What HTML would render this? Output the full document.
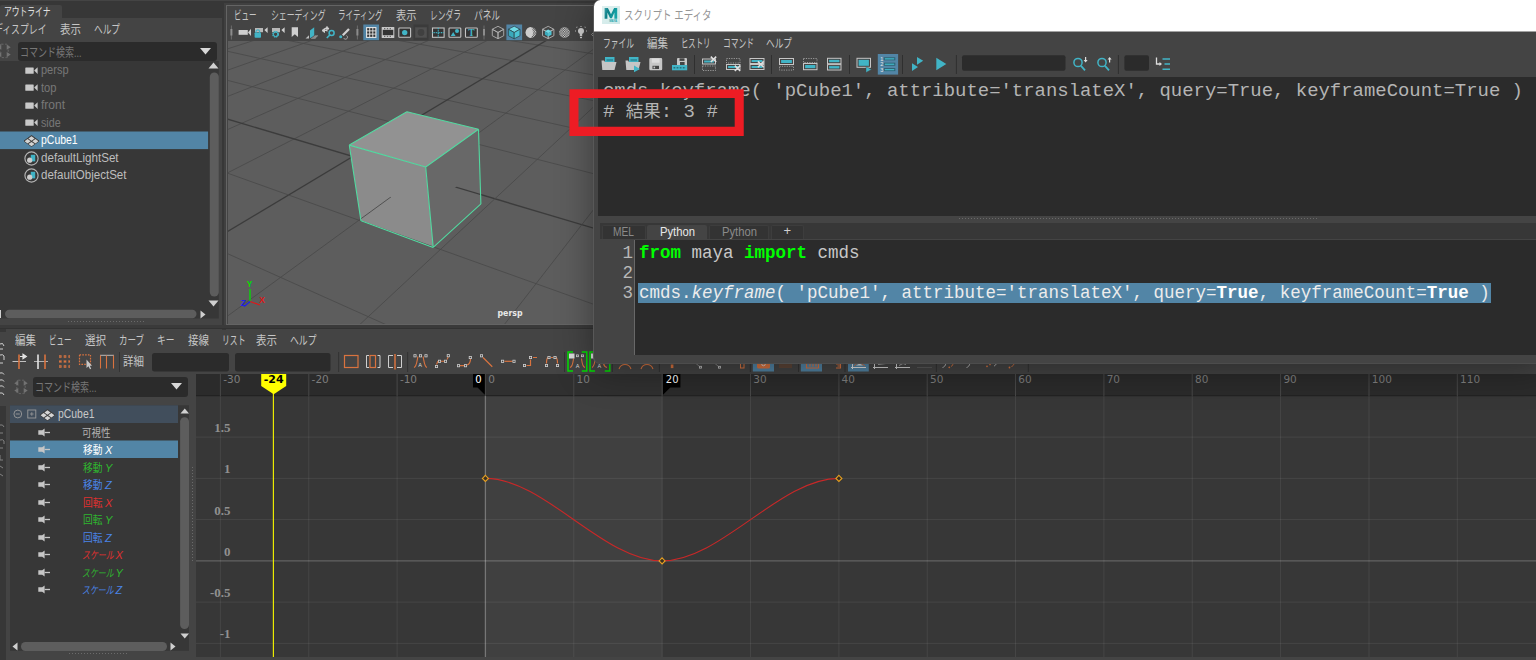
<!DOCTYPE html><html><head><meta charset="utf-8"><title>Maya</title><style>
html,body{margin:0;padding:0}
body{width:1536px;height:660px;overflow:hidden;position:relative;background:#444;font-family:"Liberation Sans","Noto Sans CJK JP",sans-serif;font-size:12px;color:#c8c8c8}
div,span,svg{position:absolute;display:block;box-sizing:border-box}
span{white-space:pre}
</style></head><body>
<div style="left:0px;top:1px;width:596px;height:4px;background:#373737;"></div>
<div style="left:0px;top:5px;width:226px;height:13px;background:#373737;"></div>
<div style="left:222px;top:5px;width:4px;height:325px;background:#373737;"></div>
<div style="left:0px;top:5px;width:62px;height:14px;background:#444;border-radius:2px 2px 0 0"></div>
<span style="left:3.8px;top:5.2px;height:15px;line-height:15px;font-size:11.5px;color:#e0e0e0;transform:scaleX(0.6761);transform-origin:0 50%;">アウトライナ</span>
<span style="left:-6px;top:21.5px;height:17px;line-height:17px;font-size:12px;color:#c6c6c6;transform:scaleX(0.7377);transform-origin:0 50%;">ディスプレイ</span>
<span style="left:60px;top:21.5px;height:17px;line-height:17px;font-size:12px;color:#c6c6c6;transform:scaleX(0.8744);transform-origin:0 50%;">表示</span>
<span style="left:94px;top:21.5px;height:17px;line-height:17px;font-size:12px;color:#c6c6c6;transform:scaleX(0.7219);transform-origin:0 50%;">ヘルプ</span>
<svg style="left:-3px;top:60px" width="223" height="260"><rect x="1.00" y="1.00" width="220.80" height="257.50" fill="#373737"/></svg>
<div style="left:18px;top:42px;width:199px;height:19px;background:#2b2b2b;border-radius:3px"></div>
<span style="left:19.8px;top:43.5px;height:18px;line-height:18px;font-size:12px;color:#777;transform:scaleX(0.7499);transform-origin:0 50%;">コマンド検索...</span>
<svg style="left:200px;top:48px" width="12" height="7"><path d="M0 0h11L5.5 6.5z" fill="#d8d8d8"/></svg>
<svg style="left:-2.7px;top:43px" width="14" height="16" viewBox="0 0 14 16"><rect x="2.8" y="1.2" width="8.4" height="13.4" rx="1.5" fill="none" stroke="#666" stroke-width="1" stroke-dasharray="2.2 1.6"/><path d="M9.7 1.6l4 2.6l-4 2.6zM9.7 9l4 2.6l-4 2.6zM4.3 1.6l-4 2.6l4 2.6zM4.3 9l-4 2.6l4 2.6z" fill="#727272"/></svg>
<svg style="left:25px;top:65.5px" width="14" height="10" viewBox="0 0 14 10"><rect x="0.3" y="1.4" width="8.4" height="6.4" rx="0.6" fill="#c9c9c9"/><path d="M9.2 4.6L12.6 1.2v6.8z" fill="#c9c9c9"/></svg>
<span style="left:41.3px;top:62.1px;height:17px;line-height:17px;font-size:12px;color:#777;transform:scaleX(0.9157);transform-origin:0 50%;">persp</span>
<svg style="left:25px;top:83.0px" width="14" height="10" viewBox="0 0 14 10"><rect x="0.3" y="1.4" width="8.4" height="6.4" rx="0.6" fill="#c9c9c9"/><path d="M9.2 4.6L12.6 1.2v6.8z" fill="#c9c9c9"/></svg>
<span style="left:41.3px;top:79.6px;height:17px;line-height:17px;font-size:12px;color:#777;transform:scaleX(0.9288);transform-origin:0 50%;">top</span>
<svg style="left:25px;top:100.5px" width="14" height="10" viewBox="0 0 14 10"><rect x="0.3" y="1.4" width="8.4" height="6.4" rx="0.6" fill="#c9c9c9"/><path d="M9.2 4.6L12.6 1.2v6.8z" fill="#c9c9c9"/></svg>
<span style="left:41.3px;top:97.1px;height:17px;line-height:17px;font-size:12px;color:#777;transform:scaleX(0.9993);transform-origin:0 50%;">front</span>
<svg style="left:25px;top:118.0px" width="14" height="10" viewBox="0 0 14 10"><rect x="0.3" y="1.4" width="8.4" height="6.4" rx="0.6" fill="#c9c9c9"/><path d="M9.2 4.6L12.6 1.2v6.8z" fill="#c9c9c9"/></svg>
<span style="left:41.3px;top:114.6px;height:17px;line-height:17px;font-size:12px;color:#777;transform:scaleX(0.8948);transform-origin:0 50%;">side</span>
<svg style="left:-3px;top:130px" width="213" height="21"><rect x="1.00" y="1.50" width="210.10" height="17.60" fill="#5285a6"/></svg>
<svg style="left:23px;top:134.5px" width="17" height="12" viewBox="0 0 17 12"><path d="M8.5 0.5L16 6L8.5 11.5L1 6z" fill="#3d3d3d" stroke="#3d3d3d"/><path d="M8.5 1.2L11.6 3.5L8.5 5.7L5.4 3.5zM4.6 4.1L7.7 6.3L4.6 8.5L1.6 6.3zM12.4 4.1L15.4 6.3L12.4 8.5L9.3 6.3zM8.5 6.9L11.6 9.1L8.5 11.2L5.4 9.1z" fill="#d4d4d4"/></svg>
<span style="left:41.3px;top:132.1px;height:17px;line-height:17px;font-size:12px;color:#fff;transform:scaleX(0.8728);transform-origin:0 50%;">pCube1</span>
<svg style="left:24px;top:150.5px" width="15" height="15" viewBox="0 0 15 15"><circle cx="7.5" cy="7.5" r="6.6" fill="none" stroke="#b4b4b4" stroke-width="1.15"/><rect x="6.8" y="3.8" width="4.4" height="6.6" fill="#3fb2c4"/><circle cx="5.7" cy="9.2" r="2.6" fill="#cdcdcd"/></svg>
<span style="left:41.3px;top:149.6px;height:17px;line-height:17px;font-size:12px;color:#bebebe;transform:scaleX(0.9692);transform-origin:0 50%;">defaultLightSet</span>
<svg style="left:24px;top:168.0px" width="15" height="15" viewBox="0 0 15 15"><circle cx="7.5" cy="7.5" r="6.6" fill="none" stroke="#b4b4b4" stroke-width="1.15"/><rect x="6.8" y="3.8" width="4.4" height="6.6" fill="#3fb2c4"/><circle cx="5.7" cy="9.2" r="2.6" fill="#cdcdcd"/></svg>
<span style="left:41.3px;top:167.1px;height:17px;line-height:17px;font-size:12px;color:#bebebe;transform:scaleX(0.9635);transform-origin:0 50%;">defaultObjectSet</span>
<svg style="left:208px;top:62px" width="11" height="7"><path d="M5.5 0.5L10.5 6.5H0.5z" fill="#d0d0d0"/></svg>
<svg style="left:208px;top:71px" width="12" height="227"><rect x="1.80" y="1.50" width="9.00" height="224.00" rx="4.5" fill="#5d5d5d"/></svg>
<svg style="left:208px;top:299.5px" width="11" height="7"><path d="M5.5 6.5L10.5 0.5H0.5z" fill="#d0d0d0"/></svg>
<svg style="left:4px;top:308px" width="194" height="12"><rect x="1.00" y="1.70" width="191.50" height="8.50" rx="4.2" fill="#5d5d5d"/></svg>
<svg style="left:199.5px;top:309.5px" width="6" height="9"><path d="M0.5 0.5L5.5 4.5L0.5 8.5z" fill="#d0d0d0"/></svg>
<div style="left:0px;top:310px;width:1px;height:8px;background:#d0d0d0;"></div>
<div style="left:0px;top:318.5px;width:222px;height:7px;background:#444;"></div>
<div style="left:68px;top:320.5px;width:76px;height:1px;background:repeating-linear-gradient(90deg,#6a6a6a 0 1px,transparent 1px 3px)"></div>
<div style="left:224px;top:3px;width:372px;height:324px;background:#404040;"></div>
<div style="left:226px;top:5px;width:370px;height:320px;background:#444;border:1.5px solid #646464"></div>
<span style="left:234px;top:7.9px;height:17px;line-height:17px;font-size:12px;color:#c6c6c6;transform:scaleX(0.6247);transform-origin:0 50%;">ビュー</span>
<span style="left:270.5px;top:7.9px;height:17px;line-height:17px;font-size:12px;color:#c6c6c6;transform:scaleX(0.6553);transform-origin:0 50%;">シェーディング</span>
<span style="left:338px;top:7.9px;height:17px;line-height:17px;font-size:12px;color:#c6c6c6;transform:scaleX(0.6263);transform-origin:0 50%;">ライティング</span>
<span style="left:396px;top:7.9px;height:17px;line-height:17px;font-size:12px;color:#c6c6c6;transform:scaleX(0.8536);transform-origin:0 50%;">表示</span>
<span style="left:430px;top:7.9px;height:17px;line-height:17px;font-size:12px;color:#c6c6c6;transform:scaleX(0.6456);transform-origin:0 50%;">レンダラ</span>
<span style="left:474px;top:7.9px;height:17px;line-height:17px;font-size:12px;color:#c6c6c6;transform:scaleX(0.7219);transform-origin:0 50%;">パネル</span>
<svg style="left:227.5px;top:40.5px" width="368.5" height="283.1" viewBox="227.5 40.5 368.5 283.1"><rect x="227.5" y="40.5" width="368.5" height="283.1" fill="#5d5d5d"/><path d="M191.7 -9.3L178.8 -6.5" stroke="#4b4b4b" stroke-width="0.9"/><path d="M624.7 -9.0L643.2 -7.0" stroke="#4b4b4b" stroke-width="0.9"/><path d="M233.2 -9.0L181.8 3.0" stroke="#4b4b4b" stroke-width="0.9"/><path d="M538.8 -9.0L644.9 3.2" stroke="#4b4b4b" stroke-width="0.9"/><path d="M275.1 -8.8L180.2 15.1" stroke="#4b4b4b" stroke-width="0.9"/><path d="M453.8 -9.0L641.4 14.3" stroke="#4b4b4b" stroke-width="0.9"/><path d="M320.8 -9.4L178.4 29.1" stroke="#4b4b4b" stroke-width="0.9"/><path d="M369.4 -9.0L643.3 27.8" stroke="#4b4b4b" stroke-width="0.9"/><path d="M363.2 -9.1L182.1 43.9" stroke="#4b4b4b" stroke-width="0.9"/><path d="M285.8 -9.1L645.4 43.6" stroke="#4b4b4b" stroke-width="0.9"/><path d="M405.9 -8.9L180.1 63.4" stroke="#4b4b4b" stroke-width="0.9"/><path d="M202.9 -9.1L641.1 61.1" stroke="#4b4b4b" stroke-width="0.9"/><path d="M448.9 -8.6L177.7 87.1" stroke="#4b4b4b" stroke-width="0.9"/><path d="M178.9 1.2L643.4 83.4" stroke="#4b4b4b" stroke-width="0.9"/><path d="M494.7 -9.2L182.6 113.4" stroke="#4b4b4b" stroke-width="0.9"/><path d="M178.3 18.4L638.0 109.0" stroke="#4b4b4b" stroke-width="0.9"/><path d="M538.2 -9.0L179.9 150.0" stroke="#4b4b4b" stroke-width="0.9"/><path d="M181.4 40.6L640.5 142.7" stroke="#4b4b4b" stroke-width="0.9"/><path d="M582.1 -8.7L186.6 193.0" stroke="#4b4b4b" stroke-width="0.9"/><path d="M180.9 68.1L643.7 186.1" stroke="#4b4b4b" stroke-width="0.9"/><path d="M627.9 -9.3L183.7 257.1" stroke="#3c3c3c" stroke-width="1.35"/><path d="M180.3 104.7L635.7 240.4" stroke="#3c3c3c" stroke-width="1.35"/><path d="M645.7 10.3L179.5 350.2" stroke="#4b4b4b" stroke-width="0.9"/><path d="M179.4 155.6L639.2 320.3" stroke="#4b4b4b" stroke-width="0.9"/><path d="M643.9 59.1L312.5 367.6" stroke="#4b4b4b" stroke-width="0.9"/><path d="M178.1 231.2L482.0 367.4" stroke="#4b4b4b" stroke-width="0.9"/><path d="M643.7 143.8L474.0 362.5" stroke="#4b4b4b" stroke-width="0.9"/><path d="M186.3 361.7L196.8 368.0" stroke="#4b4b4b" stroke-width="0.9"/><path d="M643.3 336.0L627.6 368.9" stroke="#4b4b4b" stroke-width="0.9"/><path d="M348.8 144.6L425.2 166.5L432.7 246.9L360.5 220.3z" fill="#8b8b8b"/><path d="M425.2 166.5L478.0 128.7L480.4 203.4L432.7 246.9z" fill="#686868"/><path d="M348.8 144.6L406.4 111.3L478.0 128.7L425.2 166.5z" fill="#929292"/><clipPath id="lowc"><path d="M355.1 184.9L428.3 208.7L479.2 167.1L480.4 203.4L432.7 246.9L360.5 220.3z"/></clipPath><g clip-path="url(#lowc)"><path d="M191.7 -9.3L178.8 -6.5" stroke="#4b4b4b" stroke-width="0.9"/><path d="M624.7 -9.0L643.2 -7.0" stroke="#4b4b4b" stroke-width="0.9"/><path d="M233.2 -9.0L181.8 3.0" stroke="#4b4b4b" stroke-width="0.9"/><path d="M538.8 -9.0L644.9 3.2" stroke="#4b4b4b" stroke-width="0.9"/><path d="M275.1 -8.8L180.2 15.1" stroke="#4b4b4b" stroke-width="0.9"/><path d="M453.8 -9.0L641.4 14.3" stroke="#4b4b4b" stroke-width="0.9"/><path d="M320.8 -9.4L178.4 29.1" stroke="#4b4b4b" stroke-width="0.9"/><path d="M369.4 -9.0L643.3 27.8" stroke="#4b4b4b" stroke-width="0.9"/><path d="M363.2 -9.1L182.1 43.9" stroke="#4b4b4b" stroke-width="0.9"/><path d="M285.8 -9.1L645.4 43.6" stroke="#4b4b4b" stroke-width="0.9"/><path d="M405.9 -8.9L180.1 63.4" stroke="#4b4b4b" stroke-width="0.9"/><path d="M202.9 -9.1L641.1 61.1" stroke="#4b4b4b" stroke-width="0.9"/><path d="M448.9 -8.6L177.7 87.1" stroke="#4b4b4b" stroke-width="0.9"/><path d="M178.9 1.2L643.4 83.4" stroke="#4b4b4b" stroke-width="0.9"/><path d="M494.7 -9.2L182.6 113.4" stroke="#4b4b4b" stroke-width="0.9"/><path d="M178.3 18.4L638.0 109.0" stroke="#4b4b4b" stroke-width="0.9"/><path d="M538.2 -9.0L179.9 150.0" stroke="#4b4b4b" stroke-width="0.9"/><path d="M181.4 40.6L640.5 142.7" stroke="#4b4b4b" stroke-width="0.9"/><path d="M582.1 -8.7L186.6 193.0" stroke="#4b4b4b" stroke-width="0.9"/><path d="M180.9 68.1L643.7 186.1" stroke="#4b4b4b" stroke-width="0.9"/><path d="M627.9 -9.3L183.7 257.1" stroke="#3c3c3c" stroke-width="1.35"/><path d="M180.3 104.7L635.7 240.4" stroke="#3c3c3c" stroke-width="1.35"/><path d="M645.7 10.3L179.5 350.2" stroke="#4b4b4b" stroke-width="0.9"/><path d="M179.4 155.6L639.2 320.3" stroke="#4b4b4b" stroke-width="0.9"/><path d="M643.9 59.1L312.5 367.6" stroke="#4b4b4b" stroke-width="0.9"/><path d="M178.1 231.2L482.0 367.4" stroke="#4b4b4b" stroke-width="0.9"/><path d="M643.7 143.8L474.0 362.5" stroke="#4b4b4b" stroke-width="0.9"/><path d="M186.3 361.7L196.8 368.0" stroke="#4b4b4b" stroke-width="0.9"/><path d="M643.3 336.0L627.6 368.9" stroke="#4b4b4b" stroke-width="0.9"/></g><path d="M348.8 144.6L406.4 111.3M406.4 111.3L478.0 128.7M478.0 128.7L425.2 166.5M425.2 166.5L348.8 144.6M348.8 144.6L360.5 220.3M425.2 166.5L432.7 246.9M478.0 128.7L480.4 203.4M360.5 220.3L432.7 246.9M432.7 246.9L480.4 203.4" stroke="#52d9a0" stroke-width="1.1" fill="none" stroke-linejoin="round"/><path d="M249.5 301V288.5" stroke="#00e000" stroke-width="1.3"/><path d="M249.5 301L259.5 304.5" stroke="#e01818" stroke-width="1.3"/><path d="M249.5 301L243.5 306" stroke="#2020e8" stroke-width="1.3"/><text x="246.3" y="287" font-size="8.5" font-weight="bold" fill="#00e000" font-family="Liberation Sans,sans-serif">Y</text><text x="258.8" y="303" font-size="8.5" font-weight="bold" fill="#e01818" font-family="Liberation Sans,sans-serif">X</text><text x="240.2" y="306" font-size="8.5" font-weight="bold" fill="#2020e8" font-family="Liberation Sans,sans-serif">Z</text><text x="497" y="315.5" font-size="9.5" font-weight="bold" fill="#e8e8e8" font-family="DejaVu Sans,Liberation Sans,sans-serif" textLength="25" lengthAdjust="spacingAndGlyphs">persp</text></svg>
<svg style="left:228px;top:23px" width="366" height="18" viewBox="228 23 366 18"><path d="M231.4 25.5V39.5" stroke="#777" stroke-width="0.8"/><rect x="230.4" y="29" width="2" height="6.5" fill="#8c8c8c"/><path d="M357.4 25.5V39.5" stroke="#777" stroke-width="0.8"/><rect x="356.4" y="29" width="2" height="6.5" fill="#8c8c8c"/><path d="M484 25.5V39.5" stroke="#777" stroke-width="0.8"/><rect x="483" y="29" width="2" height="6.5" fill="#8c8c8c"/><rect x="238.6" y="30" width="9.2" height="4.8" fill="#cfcfcf"/><path d="M248 32.4L251 28.8V36z" fill="#cfcfcf"/><rect x="255" y="28" width="8" height="4.2" fill="#b8b8b8"/><path d="M264.4 30L267.6 27.2V33z" fill="#cfcfcf"/><rect x="254.6" y="32.5" width="6.4" height="5.3" rx="0.8" fill="#41b4c6"/><path d="M256 32.8V31.6a1.8 1.8 0 0 1 3.6 0V32.8" fill="none" stroke="#41b4c6" stroke-width="1.2"/><rect x="272" y="28" width="8" height="4.2" fill="#b8b8b8"/><path d="M281.4 30L284.6 27.2V33z" fill="#cfcfcf"/><circle cx="275.6" cy="34.3" r="2.6" fill="none" stroke="#41b4c6" stroke-width="1.7" stroke-dasharray="1.5 0.55"/><circle cx="275.6" cy="34.3" r="2.2" fill="none" stroke="#41b4c6" stroke-width="1"/><path d="M291.7 27.3H298V37L294.85 34.3L291.7 37z" fill="#cfcfcf"/><path d="M310 30.6L314.2 27.3V35.6L310 38.2z" fill="#41b4c6"/><path d="M305.5 38.5L309 35.2V38.5zM310.8 38.6L315 35.6H318.2L315.4 38.6z" fill="#bdbdbd"/><path d="M312 37.5L317 37.2M313 36.3L317.5 36" stroke="#444" stroke-width="0.5"/><path d="M322 30.5L324.5 28.5V32.5zM324.5 30.5H327M327 26.5L325 29H329zM327 29V31.5" fill="#cfcfcf" stroke="#cfcfcf" stroke-width="1"/><circle cx="331.6" cy="33" r="2.5" fill="none" stroke="#41b4c6" stroke-width="1.5"/><path d="M329.8 35L326.8 38" stroke="#41b4c6" stroke-width="1.7"/><path d="M348.2 28.2L349.8 29.8L343.6 36L342 34.4z" fill="#cfcfcf"/><circle cx="340.7" cy="36.7" r="1.5" fill="#41b4c6"/><path d="M346.5 35.5a2 2 0 1 1-2.8 2.6" fill="none" stroke="#aaa" stroke-width="0.9"/><rect x="363.3" y="24.5" width="15.7" height="15.7" fill="#5285a6"/><rect x="366.6" y="27.6" width="9.3" height="9.8" fill="#333" stroke="#e6e6e6" stroke-width="1.1"/><path d="M369.7 27.6V37.4M372.8 27.6V37.4M366.6 30.9H375.9M366.6 34.1H375.9" stroke="#e6e6e6" stroke-width="0.9"/><rect x="382.2" y="27.6" width="11.6" height="9.8" fill="#333" stroke="#cfcfcf" stroke-width="1"/><rect x="382.2" y="27.6" width="11.6" height="2.2" fill="#cfcfcf"/><rect x="382.2" y="35.2" width="11.6" height="2.2" fill="#cfcfcf"/><path d="M384 28.7H392.5M384 36.3H392.5" stroke="#444" stroke-width="0.9" stroke-dasharray="1.4 1.4"/><rect x="398.8" y="28" width="11.8" height="9.3" rx="0.8" fill="#333" stroke="#c4c4c4" stroke-width="1.1"/><circle cx="404.7" cy="32.6" r="2.7" fill="#41b4c6"/><rect x="413.5" y="24.5" width="15" height="15.7" fill="#3b3b3b"/><rect x="415.2" y="27.3" width="11.6" height="10.4" fill="#505050"/><circle cx="421" cy="32.5" r="3.4" fill="#404040"/><rect x="432.5" y="28" width="11.6" height="9.3" fill="#333" stroke="#c4c4c4" stroke-width="1.1"/><path d="M438.3 28V37.3M432.5 32.6H444" stroke="#41b4c6" stroke-width="1.3" stroke-dasharray="1 0.7"/><rect x="449" y="28" width="11.8" height="9.3" rx="0.8" fill="#333" stroke="#c4c4c4" stroke-width="1.1"/><circle cx="457" cy="31" r="2" fill="#41b4c6"/><path d="M450.8 36L453.2 32L455.6 36z" fill="#41b4c6"/><rect x="465.5" y="28" width="11.8" height="9.3" rx="0.8" fill="#333" stroke="#c4c4c4" stroke-width="1.1"/><text x="468.2" y="36" font-family="Liberation Serif,serif" font-weight="bold" font-size="9.5" fill="#41b4c6">T</text><path d="M498 26.3L503.704 29.276L498 32.5L492.296 29.276z" fill="none" stroke="#b0b0b0" stroke-width="0.9" stroke-linejoin="round"/><path d="M492.296 29.276L498 32.5V38.7L492.296 35.724000000000004z" fill="none" stroke="#b0b0b0" stroke-width="0.9" stroke-linejoin="round"/><path d="M503.704 29.276L498 32.5V38.7L503.704 35.724000000000004z" fill="none" stroke="#b0b0b0" stroke-width="0.9" stroke-linejoin="round"/><rect x="506.4" y="24.5" width="15.7" height="15.7" fill="#5285a6"/><path d="M514.2 26.2L519.9960000000001 29.224L514.2 32.5L508.40400000000005 29.224z" fill="#6fdbe6" stroke="#2d3d44" stroke-width="0.7" stroke-linejoin="round"/><path d="M508.40400000000005 29.224L514.2 32.5V38.8L508.40400000000005 35.775999999999996z" fill="#3aa9bb" stroke="#2d3d44" stroke-width="0.7" stroke-linejoin="round"/><path d="M519.9960000000001 29.224L514.2 32.5V38.8L519.9960000000001 35.775999999999996z" fill="#4cc3d3" stroke="#2d3d44" stroke-width="0.7" stroke-linejoin="round"/><defs><pattern id="ck" width="2.4" height="2.4" patternUnits="userSpaceOnUse"><rect width="2.4" height="2.4" fill="#444"/><rect width="1.2" height="1.2" fill="#ddd"/><rect x="1.2" y="1.2" width="1.2" height="1.2" fill="#ddd"/></pattern></defs><circle cx="531" cy="32.5" r="5.4" fill="url(#ck)"/><path d="M531 27.1a5.4 5.4 0 0 0 0 10.8 8 8 0 0 0 0-10.8z" fill="#cdcdcd"/><path d="M548.2 26.3L553.904 29.276L548.2 32.5L542.4960000000001 29.276z" fill="none" stroke="#b0b0b0" stroke-width="0.9" stroke-linejoin="round"/><path d="M542.4960000000001 29.276L548.2 32.5V38.7L542.4960000000001 35.724000000000004z" fill="none" stroke="#b0b0b0" stroke-width="0.9" stroke-linejoin="round"/><path d="M553.904 29.276L548.2 32.5V38.7L553.904 35.724000000000004z" fill="none" stroke="#b0b0b0" stroke-width="0.9" stroke-linejoin="round"/><path d="M548.2 29.4L551.5120000000001 31.128L548.2 33L544.888 31.128z" fill="#6fdbe6" stroke="none" stroke-width="0" stroke-linejoin="round"/><path d="M544.888 31.128L548.2 33V36.6L544.888 34.872z" fill="#3aa9bb" stroke="none" stroke-width="0" stroke-linejoin="round"/><path d="M551.5120000000001 31.128L548.2 33V36.6L551.5120000000001 34.872z" fill="#4cc3d3" stroke="none" stroke-width="0" stroke-linejoin="round"/><circle cx="564.5" cy="32.5" r="5.4" fill="url(#ck)"/><circle cx="581" cy="31" r="3" fill="#cfcfcf"/><rect x="579.8" y="33" width="2.4" height="3.2" fill="#cfcfcf"/><rect x="580" y="37" width="2" height="1.2" fill="#cfcfcf"/><path d="M581 26V27M576 31H575M586 31H587M577.2 27.5L576.6 26.9M584.8 27.5L585.4 26.9" stroke="#bbb" stroke-width="1.2"/><path d="M593.5 32.5L591.5 34.5L593.5 36.5" stroke="#999" fill="none" stroke-width="0.9"/></svg>
<div style="left:0px;top:325px;width:600px;height:3px;background:#3a3a3a;"></div>
<div style="left:0px;top:327.5px;width:600px;height:1.5px;background:#323232;"></div>
<div style="left:0px;top:329px;width:6px;height:331px;background:#373737;"></div>
<div style="left:0px;top:332px;width:6px;height:74px;background:#444;"></div>
<svg style="left:0;top:329px" width="6" height="200" viewBox="0 329 6 200"><path d="M0 344q3 -2 4 2M0 349h3M0 355q3 -1 4 1v4M0 363h3M0 373q3 -1 4 1.5M0 380q3 -1 4 1.5M0 386q3 -1 4 1.5M0 393q3 -1 4 2" stroke="#e0e0e0" stroke-width="0.9" fill="none"/><path d="M0 425q3 -1 4 2M0 433h3M0 440q3 -1 4 1v3M0 448h3M0 455v5h3M0 466l3 2M0 474l3 2" stroke="#8a8a8a" stroke-width="0.9" fill="none"/></svg>
<span style="left:15px;top:332.8px;height:17px;line-height:17px;font-size:12px;color:#c6c6c6;transform:scaleX(0.8744);transform-origin:0 50%;">編集</span>
<span style="left:49px;top:332.8px;height:17px;line-height:17px;font-size:12px;color:#c6c6c6;transform:scaleX(0.6247);transform-origin:0 50%;">ビュー</span>
<span style="left:85px;top:332.8px;height:17px;line-height:17px;font-size:12px;color:#c6c6c6;transform:scaleX(0.8744);transform-origin:0 50%;">選択</span>
<span style="left:119px;top:332.8px;height:17px;line-height:17px;font-size:12px;color:#c6c6c6;transform:scaleX(0.7086);transform-origin:0 50%;">カーブ</span>
<span style="left:157px;top:332.8px;height:17px;line-height:17px;font-size:12px;color:#c6c6c6;transform:scaleX(0.7287);transform-origin:0 50%;">キー</span>
<span style="left:188px;top:332.8px;height:17px;line-height:17px;font-size:12px;color:#c6c6c6;transform:scaleX(0.8744);transform-origin:0 50%;">接線</span>
<span style="left:221.5px;top:332.8px;height:17px;line-height:17px;font-size:12px;color:#c6c6c6;transform:scaleX(0.6525);transform-origin:0 50%;">リスト</span>
<span style="left:256px;top:332.8px;height:17px;line-height:17px;font-size:12px;color:#c6c6c6;transform:scaleX(0.8744);transform-origin:0 50%;">表示</span>
<span style="left:290px;top:332.8px;height:17px;line-height:17px;font-size:12px;color:#c6c6c6;transform:scaleX(0.7358);transform-origin:0 50%;">ヘルプ</span>
<svg style="left:6px;top:349px" width="1100" height="25" viewBox="6 349 1100 25"><path d="M12.5 361.5H26" stroke="#cfcfcf" stroke-width="0.9"/><path d="M19 354.5V369" stroke="#d9733f" stroke-width="1.6"/><path d="M20 356.5H24M23 354.3L26.3 356.5L23 358.7z" stroke="#e4e4e4" fill="#e4e4e4" stroke-width="1.2"/><path d="M34 361.5H48" stroke="#bbb" stroke-width="0.9"/><path d="M38 354.5V369" stroke="#e4e4e4" stroke-width="1.6"/><path d="M45 354.5V369" stroke="#d9733f" stroke-width="1.6"/><path d="M59 356.5H70M59 361.5H70M59 366.5H70" stroke="#d9733f" stroke-width="2.6" stroke-dasharray="2.6 2.1"/><path d="M60 356V367M65 356V367M70 356V367" stroke="#555" stroke-width="0.6" stroke-dasharray="1 1"/><rect x="79.5" y="354.8" width="11" height="9.5" fill="none" stroke="#d9733f" stroke-width="1.2" stroke-dasharray="1.6 1.2"/><path d="M86.5 359.5V368L88.5 366.2L90 369.3L91.2 368.7L89.8 365.8H92z" fill="#c8c8c8"/><path d="M100 355.3H114" stroke="#bbb" stroke-width="1"/><path d="M100.5 355.5V368.5M106.5 355.5V368.5M113.5 355.5V368.5" stroke="#d9733f" stroke-width="1.1"/><path d="M119.5 352V372" stroke="#333" stroke-width="1"/><rect x="152" y="353" width="77" height="18.5" rx="2.5" fill="#2b2b2b"/><rect x="235" y="353" width="95.5" height="18.5" rx="2.5" fill="#2b2b2b"/><path d="M338.6 352V372" stroke="#333" stroke-width="1"/><rect x="344.5" y="355.5" width="13.5" height="12" fill="none" stroke="#d9733f" stroke-width="1.2"/><path d="M369 355.5H366.5V367.5H369M377.5 355.5H380V367.5H377.5" fill="none" stroke="#cfcfcf" stroke-width="1"/><rect x="370" y="355.5" width="5.5" height="12" fill="none" stroke="#d9733f" stroke-width="1.2"/><path d="M393 355.5H388.5V367.5H393M397 355.5H401.5V367.5H397" fill="none" stroke="#cfcfcf" stroke-width="1"/><path d="M395 354V369.5" stroke="#d9733f" stroke-width="1.5"/><path d="M407.6 352V372" stroke="#333" stroke-width="1"/><path d="M414 367.5c3 -1 3 -8 4 -11M427 367.5c-3 -1 -3 -8 -4 -11" fill="none" stroke="#d9733f" stroke-width="1.1"/><rect x="413.9" y="354.7" width="2.2" height="2.2" fill="#444" stroke="#d0d0d0" stroke-width="0.8"/><rect x="419.4" y="354.7" width="2.2" height="2.2" fill="#444" stroke="#d0d0d0" stroke-width="0.8"/><rect x="424.9" y="354.7" width="2.2" height="2.2" fill="#444" stroke="#d0d0d0" stroke-width="0.8"/><text x="418.3" y="367" font-size="5.5" fill="#ddd" font-family="Liberation Sans,sans-serif">A</text><path d="M436.5 364.5l1.5 -3.5M441 361.3h3M447 359.5l1.3 -2.5" stroke="#d9733f" stroke-width="1.1"/><rect x="435.4" y="365.4" width="2.2" height="2.2" fill="#444" stroke="#d0d0d0" stroke-width="0.8"/><rect x="438.4" y="360.2" width="2.2" height="2.2" fill="#444" stroke="#d0d0d0" stroke-width="0.8"/><rect x="444.4" y="360.2" width="2.2" height="2.2" fill="#444" stroke="#d0d0d0" stroke-width="0.8"/><rect x="447.2" y="354.59999999999997" width="2.2" height="2.2" fill="#444" stroke="#d0d0d0" stroke-width="0.8"/><path d="M460 365.7h4.5M467 365c3 -1 3.5 -4 3.5 -6" fill="none" stroke="#d9733f" stroke-width="1.2"/><rect x="457.4" y="364.59999999999997" width="2.2" height="2.2" fill="#444" stroke="#d0d0d0" stroke-width="0.8"/><rect x="464.4" y="364.59999999999997" width="2.2" height="2.2" fill="#444" stroke="#d0d0d0" stroke-width="0.8"/><rect x="469.2" y="356.4" width="2.2" height="2.2" fill="#444" stroke="#d0d0d0" stroke-width="0.8"/><path d="M483 357.5L492.3 366.7" stroke="#d9733f" stroke-width="1.2"/><rect x="480.4" y="354.7" width="2.2" height="2.2" fill="#444" stroke="#d0d0d0" stroke-width="0.8"/><path d="M504.5 361.3H512.5" stroke="#d9733f" stroke-width="1.2"/><rect x="501.5" y="360.2" width="2.2" height="2.2" fill="#444" stroke="#d0d0d0" stroke-width="0.8"/><rect x="512.9" y="360.2" width="2.2" height="2.2" fill="#444" stroke="#d0d0d0" stroke-width="0.8"/><path d="M526.5 365.5H530.5V359.5M533 357.5H537" fill="none" stroke="#d9733f" stroke-width="1.2"/><rect x="523.4" y="364.4" width="2.2" height="2.2" fill="#444" stroke="#d0d0d0" stroke-width="0.8"/><rect x="529.4" y="356.4" width="2.2" height="2.2" fill="#444" stroke="#d0d0d0" stroke-width="0.8"/><path d="M546.5 363.5c0 -3 0 -5 1.5 -6M551 357.5h2M557.5 363.5c0 -3 0 -5 -1.5 -6" fill="none" stroke="#d9733f" stroke-width="1.2"/><rect x="547.9" y="356.4" width="2.2" height="2.2" fill="#444" stroke="#d0d0d0" stroke-width="0.8"/><rect x="553.9" y="356.4" width="2.2" height="2.2" fill="#444" stroke="#d0d0d0" stroke-width="0.8"/><rect x="545.4" y="364.4" width="2.2" height="2.2" fill="#444" stroke="#d0d0d0" stroke-width="0.8"/><rect x="556.4" y="364.4" width="2.2" height="2.2" fill="#444" stroke="#d0d0d0" stroke-width="0.8"/><path d="M564.5 352V372" stroke="#333" stroke-width="1"/><path d="M573 352H568V371H573M581.8 352H586.8V371H581.8" fill="none" stroke="#00e000" stroke-width="1.5"/><path d="M595 352H590V371H595M604.8 352H609.8V371H604.8" fill="none" stroke="#00e000" stroke-width="1.5"/><path d="M570 367.5c3 -1 3 -6 3.5 -9M585 367.5c-3 -1 -3 -6 -3.5 -9" fill="none" stroke="#d9733f" stroke-width="1.1"/><rect x="569" y="353.5" width="5.5" height="5" fill="#d8d8d8"/><rect x="576.6" y="354.90000000000003" width="1.8" height="1.8" fill="#444" stroke="#d0d0d0" stroke-width="0.8"/><rect x="581.6" y="354.90000000000003" width="1.8" height="1.8" fill="#444" stroke="#d0d0d0" stroke-width="0.8"/><text x="575.8" y="367.5" font-size="5.5" fill="#ddd" font-family="Liberation Sans,sans-serif">A</text><path d="M592 367.5c2 -1 2.5 -4 3 -7M607 367.5c-2 -0.5 -3 -2 -3.5 -4" fill="none" stroke="#d9733f" stroke-width="1.1"/><rect x="591" y="353.5" width="5.5" height="5" fill="#d8d8d8"/><text x="597.5" y="367.5" font-size="5.5" fill="#ddd" font-family="Liberation Sans,sans-serif">A</text><path d="M612.3 364V372" stroke="#333" stroke-width="1"/><path d="M619 369c2 -6 10 -6 12 0M641 369c2 -6 10 -6 12 0" fill="none" stroke="#d9733f" stroke-width="1.1"/><path d="M659.4 364V372" stroke="#333" stroke-width="1"/><rect x="670.8" y="364.5" width="2.6" height="3.6" fill="#d9733f"/><rect x="699.6" y="366.3" width="1.8" height="1.8" fill="#444" stroke="#d0d0d0" stroke-width="0.8"/><rect x="718.6" y="366.3" width="1.8" height="1.8" fill="#444" stroke="#d0d0d0" stroke-width="0.8"/><path d="M696 363.5l3.5 3M715 363.5l3.5 3" stroke="#999" stroke-width="0.7"/><rect x="740.5" y="363" width="3.5" height="5" fill="none" stroke="#d9733f" stroke-width="1"/><path d="M750.3 364V372" stroke="#333" stroke-width="1"/><rect x="752.8" y="363" width="21.2" height="8.5" fill="#5285a6"/><path d="M757 363.5h13v3.5a1.5 1.5 0 0 1 -1.5 1.5h-10a1.5 1.5 0 0 1 -1.5 -1.5z" fill="#d9733f"/><circle cx="763.5" cy="364" r="1.8" fill="none" stroke="#ddd" stroke-width="0.8"/><rect x="779" y="363.5" width="13" height="4.5" fill="#5e4638"/><path d="M798.5 364V372" stroke="#333" stroke-width="1"/><rect x="800.8" y="363" width="21.2" height="8.5" fill="#5285a6"/><path d="M806.5 363.5v4.5h12v-4.5M810 363.5v3M813 363.5v3M816 363.5v3" fill="none" stroke="#d9733f" stroke-width="1.2"/><path d="M836 364h4.5v4H836M837.5 366h3" fill="none" stroke="#d9733f" stroke-width="1.1"/><path d="M845 364V372" stroke="#333" stroke-width="1"/><rect x="848" y="363" width="20.8" height="8.5" fill="#5285a6"/><path d="M851 367.5h15M852.5 364v5" stroke="#e4e4e4" stroke-width="1"/><path d="M854 366l3 -2.5h4l4 2.5" fill="none" stroke="#d9733f" stroke-width="0.9"/><path d="M856 365.5l3.5 -2 3.5 2z" fill="#ddd"/><path d="M873 367.5h15M874.5 364v5M895 367.5h15M896.5 364v5" stroke="#d4d4d4" stroke-width="1"/><path d="M878 364.5l8 -1M899 365.5l4 -2l3 1" stroke="#bbb" stroke-width="0.8" fill="none"/><path d="M917 367.5h15" stroke="#5a5a5a" stroke-width="1"/><path d="M936.4 364V372" stroke="#333" stroke-width="1"/><path d="M942.5 367.5c2 -0.5 3 -2 3.3 -4M966.5 367.5c2 -0.5 3 -2 3.3 -4M994 366c1.5 -0.5 2 -1.5 2.3 -2.5" fill="none" stroke="#bbb" stroke-width="0.9"/><path d="M951 366.5c1.2 -0.5 1.8 -1.5 2 -3M1011.5 366.5c1.5 -0.5 2.2 -1.5 2.5 -3" fill="none" stroke="#d9733f" stroke-width="1"/><circle cx="949.3" cy="367.3" r="0.9" fill="#d9733f"/><circle cx="987" cy="366.3" r="0.9" fill="#d9733f"/><circle cx="990" cy="364.6" r="0.8" fill="#d9733f"/><circle cx="1009.5" cy="367.5" r="0.9" fill="#d9733f"/><path d="M1028.3 364V372" stroke="#333" stroke-width="1"/></svg>
<span style="left:123px;top:352.6px;height:18px;line-height:18px;font-size:12px;color:#c6c6c6;transform:scaleX(0.8744);transform-origin:0 50%;">詳細</span>
<div style="left:33px;top:377px;width:155px;height:19.5px;background:#2b2b2b;border-radius:3px"></div>
<span style="left:34.8px;top:378.5px;height:18.5px;line-height:18.5px;font-size:12px;color:#777;transform:scaleX(0.7499);transform-origin:0 50%;">コマンド検索...</span>
<svg style="left:171px;top:383px" width="12" height="7"><path d="M0 0h11L5.5 6.5z" fill="#d8d8d8"/></svg>
<svg style="left:13.8px;top:378.7px" width="14" height="16" viewBox="0 0 14 16"><rect x="2.8" y="1.2" width="8.4" height="13.4" rx="1.5" fill="none" stroke="#666" stroke-width="1" stroke-dasharray="2.2 1.6"/><path d="M9.7 1.6l4 2.6l-4 2.6zM9.7 9l4 2.6l-4 2.6zM4.3 1.6l-4 2.6l4 2.6zM4.3 9l-4 2.6l4 2.6z" fill="#727272"/></svg>
<svg style="left:9px;top:404px" width="181" height="248"><rect x="1.00" y="1.30" width="179.00" height="245.50" fill="#373737"/></svg>
<svg style="left:9px;top:404px" width="170" height="20"><rect x="1.00" y="1.30" width="168.00" height="17.70" fill="#414e5c"/></svg>
<svg style="left:9px;top:439px" width="170" height="20"><rect x="1.00" y="1.50" width="168.00" height="17.50" fill="#5285a6"/></svg>
<svg style="left:13px;top:409px" width="40" height="12" viewBox="13 409 40 12"><circle cx="17.8" cy="414" r="3.9" fill="none" stroke="#9a9a9a" stroke-width="0.9"/><path d="M15.8 414h4" stroke="#9a9a9a" stroke-width="0.9"/><rect x="27.8" y="410" width="8" height="8" fill="none" stroke="#9a9a9a" stroke-width="0.9"/><path d="M30 414h3.6M31.8 412.2v3.6" stroke="#9a9a9a" stroke-width="0.8"/></svg>
<svg style="left:39px;top:408.5px" width="17" height="12" viewBox="0 0 17 12"><path d="M8.5 0.5L16 6L8.5 11.5L1 6z" fill="#3d3d3d" stroke="#3d3d3d"/><path d="M8.5 1.2L11.6 3.5L8.5 5.7L5.4 3.5zM4.6 4.1L7.7 6.3L4.6 8.5L1.6 6.3zM12.4 4.1L15.4 6.3L12.4 8.5L9.3 6.3zM8.5 6.9L11.6 9.1L8.5 11.2L5.4 9.1z" fill="#d4d4d4"/></svg>
<span style="left:57.5px;top:405.8px;height:17px;line-height:17px;font-size:12px;color:#c8c8c8;transform:scaleX(0.8681);transform-origin:0 50%;">pCube1</span>
<svg style="left:37.5px;top:427.5px" width="13" height="9" viewBox="0 0 13 9"><path d="M0.3 2.3H4.2L6.6 0.6V8.4L4.2 6.7H0.3z" fill="#c6c6c6"/><path d="M6.6 4.5H12" stroke="#c6c6c6" stroke-width="1.3"/></svg>
<span style="left:82px;top:424.8px;height:17px;line-height:17px;font-size:10.8px;color:#b4b4b4;transform:scaleX(0.8799);transform-origin:0 50%;">可視性</span>
<svg style="left:37.5px;top:445.0px" width="13" height="9" viewBox="0 0 13 9"><path d="M0.3 2.3H4.2L6.6 0.6V8.4L4.2 6.7H0.3z" fill="#c6c6c6"/><path d="M6.6 4.5H12" stroke="#c6c6c6" stroke-width="1.3"/></svg>
<span style="left:82.5px;top:442.3px;height:17px;line-height:17px;font-size:10.8px;color:#fff;transform:scaleX(0.9030);transform-origin:0 50%;">移動</span>
<span style="left:105px;top:442.3px;height:17px;line-height:17px;font-size:11px;color:#fff;font-style:italic;">X</span>
<svg style="left:37.5px;top:462.5px" width="13" height="9" viewBox="0 0 13 9"><path d="M0.3 2.3H4.2L6.6 0.6V8.4L4.2 6.7H0.3z" fill="#c6c6c6"/><path d="M6.6 4.5H12" stroke="#c6c6c6" stroke-width="1.3"/></svg>
<span style="left:82.5px;top:459.8px;height:17px;line-height:17px;font-size:10.8px;color:#2fb52f;transform:scaleX(0.9030);transform-origin:0 50%;">移動</span>
<span style="left:105px;top:459.8px;height:17px;line-height:17px;font-size:11px;color:#2fb52f;font-style:italic;">Y</span>
<svg style="left:37.5px;top:480.0px" width="13" height="9" viewBox="0 0 13 9"><path d="M0.3 2.3H4.2L6.6 0.6V8.4L4.2 6.7H0.3z" fill="#c6c6c6"/><path d="M6.6 4.5H12" stroke="#c6c6c6" stroke-width="1.3"/></svg>
<span style="left:82.5px;top:477.3px;height:17px;line-height:17px;font-size:10.8px;color:#4a84e8;transform:scaleX(0.9030);transform-origin:0 50%;">移動</span>
<span style="left:105px;top:477.3px;height:17px;line-height:17px;font-size:11px;color:#4a84e8;font-style:italic;">Z</span>
<svg style="left:37.5px;top:497.5px" width="13" height="9" viewBox="0 0 13 9"><path d="M0.3 2.3H4.2L6.6 0.6V8.4L4.2 6.7H0.3z" fill="#c6c6c6"/><path d="M6.6 4.5H12" stroke="#c6c6c6" stroke-width="1.3"/></svg>
<span style="left:82.5px;top:494.8px;height:17px;line-height:17px;font-size:10.8px;color:#e03030;transform:scaleX(0.9030);transform-origin:0 50%;">回転</span>
<span style="left:105px;top:494.8px;height:17px;line-height:17px;font-size:11px;color:#e03030;font-style:italic;">X</span>
<svg style="left:37.5px;top:515.0px" width="13" height="9" viewBox="0 0 13 9"><path d="M0.3 2.3H4.2L6.6 0.6V8.4L4.2 6.7H0.3z" fill="#c6c6c6"/><path d="M6.6 4.5H12" stroke="#c6c6c6" stroke-width="1.3"/></svg>
<span style="left:82.5px;top:512.3px;height:17px;line-height:17px;font-size:10.8px;color:#2fb52f;transform:scaleX(0.9030);transform-origin:0 50%;">回転</span>
<span style="left:105px;top:512.3px;height:17px;line-height:17px;font-size:11px;color:#2fb52f;font-style:italic;">Y</span>
<svg style="left:37.5px;top:532.5px" width="13" height="9" viewBox="0 0 13 9"><path d="M0.3 2.3H4.2L6.6 0.6V8.4L4.2 6.7H0.3z" fill="#c6c6c6"/><path d="M6.6 4.5H12" stroke="#c6c6c6" stroke-width="1.3"/></svg>
<span style="left:82.5px;top:529.8px;height:17px;line-height:17px;font-size:10.8px;color:#4a84e8;transform:scaleX(0.9030);transform-origin:0 50%;">回転</span>
<span style="left:105px;top:529.8px;height:17px;line-height:17px;font-size:11px;color:#4a84e8;font-style:italic;">Z</span>
<svg style="left:37.5px;top:550.0px" width="13" height="9" viewBox="0 0 13 9"><path d="M0.3 2.3H4.2L6.6 0.6V8.4L4.2 6.7H0.3z" fill="#c6c6c6"/><path d="M6.6 4.5H12" stroke="#c6c6c6" stroke-width="1.3"/></svg>
<span style="left:81.5px;top:547.3px;height:17px;line-height:17px;font-size:10.8px;color:#e03030;font-style:italic;transform:scaleX(0.7294);transform-origin:0 50%;">スケール</span>
<span style="left:115.5px;top:547.3px;height:17px;line-height:17px;font-size:11px;color:#e03030;font-style:italic;">X</span>
<svg style="left:37.5px;top:567.5px" width="13" height="9" viewBox="0 0 13 9"><path d="M0.3 2.3H4.2L6.6 0.6V8.4L4.2 6.7H0.3z" fill="#c6c6c6"/><path d="M6.6 4.5H12" stroke="#c6c6c6" stroke-width="1.3"/></svg>
<span style="left:81.5px;top:564.8px;height:17px;line-height:17px;font-size:10.8px;color:#2fb52f;font-style:italic;transform:scaleX(0.7294);transform-origin:0 50%;">スケール</span>
<span style="left:115.5px;top:564.8px;height:17px;line-height:17px;font-size:11px;color:#2fb52f;font-style:italic;">Y</span>
<svg style="left:37.5px;top:585.0px" width="13" height="9" viewBox="0 0 13 9"><path d="M0.3 2.3H4.2L6.6 0.6V8.4L4.2 6.7H0.3z" fill="#c6c6c6"/><path d="M6.6 4.5H12" stroke="#c6c6c6" stroke-width="1.3"/></svg>
<span style="left:81.5px;top:582.3px;height:17px;line-height:17px;font-size:10.8px;color:#4a84e8;font-style:italic;transform:scaleX(0.7294);transform-origin:0 50%;">スケール</span>
<span style="left:115.5px;top:582.3px;height:17px;line-height:17px;font-size:11px;color:#4a84e8;font-style:italic;">Z</span>
<svg style="left:179.5px;top:408px" width="10" height="6"><path d="M4.75 0.5L9 5.5H0.5z" fill="#d0d0d0"/></svg>
<svg style="left:179px;top:416px" width="11" height="214"><rect x="1.10" y="1.20" width="8.90" height="211.80" rx="4.4" fill="#5d5d5d"/></svg>
<svg style="left:179.5px;top:632.5px" width="10" height="6"><path d="M4.75 5.5L9 0.5H0.5z" fill="#d0d0d0"/></svg>
<svg style="left:12px;top:642px" width="6" height="9"><path d="M5.5 0.5L0.5 4.5L5.5 8.5z" fill="#d0d0d0"/></svg>
<svg style="left:20px;top:641px" width="148" height="11"><rect x="1.00" y="1.00" width="146.00" height="9.00" rx="4.5" fill="#5d5d5d"/></svg>
<svg style="left:170px;top:642px" width="6" height="9"><path d="M0.5 0.5L5.5 4.5L0.5 8.5z" fill="#d0d0d0"/></svg>
<div style="left:69px;top:653px;width:60px;height:1px;background:repeating-linear-gradient(90deg,#6a6a6a 0 1px,transparent 1px 3px)"></div>
<div style="left:192px;top:467px;width:1px;height:94px;background:repeating-linear-gradient(0deg,#6a6a6a 0 1px,transparent 1px 3px)"></div>
<svg style="left:196px;top:374px" width="1340" height="283" viewBox="196 374 1340 283"><rect x="196" y="374" width="1340" height="283" fill="#373737"/><rect x="485.5" y="374" width="177" height="283" fill="#404040"/><rect x="196" y="374" width="1340" height="21.5" fill="#2b2b2b"/><rect x="485.5" y="374" width="177" height="21.5" fill="#303030"/><path d="M196 395.7H1536" stroke="#222" stroke-width="1.2"/><path d="M220.4 374V396" stroke="#484848" stroke-width="1"/><path d="M220.4 396V657" stroke="#fff" stroke-opacity="0.075" stroke-width="1"/><text x="223.2" y="382.9" font-size="10.5" fill="#7e7e7e" font-family="DejaVu Sans,Liberation Sans,sans-serif">-30</text><path d="M308.8 374V396" stroke="#484848" stroke-width="1"/><path d="M308.8 396V657" stroke="#fff" stroke-opacity="0.075" stroke-width="1"/><text x="311.6" y="382.9" font-size="10.5" fill="#7e7e7e" font-family="DejaVu Sans,Liberation Sans,sans-serif">-20</text><path d="M397.1 374V396" stroke="#484848" stroke-width="1"/><path d="M397.1 396V657" stroke="#fff" stroke-opacity="0.075" stroke-width="1"/><text x="399.9" y="382.9" font-size="10.5" fill="#7e7e7e" font-family="DejaVu Sans,Liberation Sans,sans-serif">-10</text><path d="M485.4 374V396" stroke="#484848" stroke-width="1"/><path d="M485.4 396V657" stroke="#fff" stroke-opacity="0.3" stroke-width="1.3"/><text x="488.2" y="382.9" font-size="10.5" fill="#7e7e7e" font-family="DejaVu Sans,Liberation Sans,sans-serif">0</text><path d="M573.8 374V396" stroke="#484848" stroke-width="1"/><path d="M573.8 396V657" stroke="#fff" stroke-opacity="0.075" stroke-width="1"/><text x="576.6" y="382.9" font-size="10.5" fill="#7e7e7e" font-family="DejaVu Sans,Liberation Sans,sans-serif">10</text><path d="M662.1 374V396" stroke="#484848" stroke-width="1"/><path d="M662.1 396V657" stroke="#fff" stroke-opacity="0.075" stroke-width="1"/><text x="664.9" y="382.9" font-size="10.5" fill="#7e7e7e" font-family="DejaVu Sans,Liberation Sans,sans-serif">20</text><path d="M750.5 374V396" stroke="#484848" stroke-width="1"/><path d="M750.5 396V657" stroke="#fff" stroke-opacity="0.075" stroke-width="1"/><text x="753.3" y="382.9" font-size="10.5" fill="#7e7e7e" font-family="DejaVu Sans,Liberation Sans,sans-serif">30</text><path d="M838.9 374V396" stroke="#484848" stroke-width="1"/><path d="M838.9 396V657" stroke="#fff" stroke-opacity="0.075" stroke-width="1"/><text x="841.6" y="382.9" font-size="10.5" fill="#7e7e7e" font-family="DejaVu Sans,Liberation Sans,sans-serif">40</text><path d="M927.2 374V396" stroke="#484848" stroke-width="1"/><path d="M927.2 396V657" stroke="#fff" stroke-opacity="0.075" stroke-width="1"/><text x="930.0" y="382.9" font-size="10.5" fill="#7e7e7e" font-family="DejaVu Sans,Liberation Sans,sans-serif">50</text><path d="M1015.5 374V396" stroke="#484848" stroke-width="1"/><path d="M1015.5 396V657" stroke="#fff" stroke-opacity="0.075" stroke-width="1"/><text x="1018.3" y="382.9" font-size="10.5" fill="#7e7e7e" font-family="DejaVu Sans,Liberation Sans,sans-serif">60</text><path d="M1103.9 374V396" stroke="#484848" stroke-width="1"/><path d="M1103.9 396V657" stroke="#fff" stroke-opacity="0.075" stroke-width="1"/><text x="1106.7" y="382.9" font-size="10.5" fill="#7e7e7e" font-family="DejaVu Sans,Liberation Sans,sans-serif">70</text><path d="M1192.2 374V396" stroke="#484848" stroke-width="1"/><path d="M1192.2 396V657" stroke="#fff" stroke-opacity="0.075" stroke-width="1"/><text x="1195.0" y="382.9" font-size="10.5" fill="#7e7e7e" font-family="DejaVu Sans,Liberation Sans,sans-serif">80</text><path d="M1280.6 374V396" stroke="#484848" stroke-width="1"/><path d="M1280.6 396V657" stroke="#fff" stroke-opacity="0.075" stroke-width="1"/><text x="1283.4" y="382.9" font-size="10.5" fill="#7e7e7e" font-family="DejaVu Sans,Liberation Sans,sans-serif">90</text><path d="M1369.0 374V396" stroke="#484848" stroke-width="1"/><path d="M1369.0 396V657" stroke="#fff" stroke-opacity="0.075" stroke-width="1"/><text x="1371.8" y="382.9" font-size="10.5" fill="#7e7e7e" font-family="DejaVu Sans,Liberation Sans,sans-serif">100</text><path d="M1457.3 374V396" stroke="#484848" stroke-width="1"/><path d="M1457.3 396V657" stroke="#fff" stroke-opacity="0.075" stroke-width="1"/><text x="1460.1" y="382.9" font-size="10.5" fill="#7e7e7e" font-family="DejaVu Sans,Liberation Sans,sans-serif">110</text><path d="M1545.7 374V396" stroke="#484848" stroke-width="1"/><path d="M1545.7 396V657" stroke="#fff" stroke-opacity="0.075" stroke-width="1"/><text x="1548.5" y="382.9" font-size="10.5" fill="#7e7e7e" font-family="DejaVu Sans,Liberation Sans,sans-serif">120</text><path d="M196 437.1H1536" stroke="#fff" stroke-opacity="0.075" stroke-width="1"/><text x="230.5" y="432.1" text-anchor="end" font-size="13" font-weight="bold" fill="#909090" font-family="Liberation Serif,serif">1.5</text><path d="M196 478.4H1536" stroke="#fff" stroke-opacity="0.075" stroke-width="1"/><text x="230.5" y="473.4" text-anchor="end" font-size="13" font-weight="bold" fill="#909090" font-family="Liberation Serif,serif">1</text><path d="M196 519.6H1536" stroke="#fff" stroke-opacity="0.075" stroke-width="1"/><text x="230.5" y="514.6" text-anchor="end" font-size="13" font-weight="bold" fill="#909090" font-family="Liberation Serif,serif">0.5</text><path d="M196 560.9H1536" stroke="#fff" stroke-opacity="0.22" stroke-width="1.3"/><text x="230.5" y="555.9" text-anchor="end" font-size="13" font-weight="bold" fill="#909090" font-family="Liberation Serif,serif">0</text><path d="M196 602.1H1536" stroke="#fff" stroke-opacity="0.075" stroke-width="1"/><text x="230.5" y="597.1" text-anchor="end" font-size="13" font-weight="bold" fill="#909090" font-family="Liberation Serif,serif">-0.5</text><path d="M196 643.4H1536" stroke="#fff" stroke-opacity="0.075" stroke-width="1"/><text x="230.5" y="638.4" text-anchor="end" font-size="13" font-weight="bold" fill="#909090" font-family="Liberation Serif,serif">-1</text><path d="M473 374H484.8V394.8L477.5 387.5H473z" fill="#000"/><text x="475.2" y="383.4" font-size="10" fill="#fff" font-family="DejaVu Sans,Liberation Sans,sans-serif">0</text><path d="M663 374H680.4V387.5H670.3L663 394.8z" fill="#000"/><text x="665.8" y="383.4" font-size="10" fill="#fff" font-family="DejaVu Sans,Liberation Sans,sans-serif">20</text><path d="M485.4 478.4C544.4 478.4 603.2 560.9 662.1 560.9S780.0 478.4 838.9 478.4" fill="none" stroke="#c82828" stroke-width="1.1"/><path d="M485.4 475.4L488.4 478.4L485.4 481.4L482.4 478.4z" fill="#3a3020" stroke="#e8a020" stroke-width="1.1"/><path d="M662.1 557.9L665.1 560.9L662.1 563.9L659.1 560.9z" fill="#3a3020" stroke="#e8a020" stroke-width="1.1"/><path d="M838.9 475.4L841.9 478.4L838.9 481.4L835.9 478.4z" fill="#3a3020" stroke="#e8a020" stroke-width="1.1"/><path d="M273.4 390V657" stroke="#f0f000" stroke-width="1.15"/><path d="M261.2 374H286.2V386L273.7 394.3L261.2 386z" fill="#ffff00"/><text x="273.7" y="383" text-anchor="middle" font-size="11" font-weight="bold" fill="#000" font-family="DejaVu Sans,Liberation Sans,sans-serif">-24</text></svg>
<div style="left:593.4px;top:0px;width:952px;height:364px;background:#444;border-radius:7px 0 0 7px;border-left:1px solid #585858;border-bottom:1px solid #4c4c4c;box-shadow:0 6px 36px rgba(0,0,0,0.38)"></div>
<svg style="left:590px;top:0" width="960" height="34"><path d="M4 31.5V6.5A6.5 6.5 0 0 1 10.5 0H960V31.5z" fill="#fff"/></svg>
<svg style="left:602px;top:6px" width="18" height="18" viewBox="0 0 18 18"><defs><linearGradient id="lg" x1="0" y1="0" x2="1" y2="1"><stop offset="0" stop-color="#e0f1f0"/><stop offset="1" stop-color="#cde8e7"/></linearGradient><linearGradient id="lm" x1="0" y1="0" x2="1" y2="0.3"><stop offset="0" stop-color="#3b9fa6"/><stop offset="0.35" stop-color="#0b7f86"/><stop offset="1" stop-color="#14a3a6"/></linearGradient></defs><rect width="18" height="18" fill="url(#lg)"/><path d="M2.6 12.8V1.9h3.3L9 8.3l3.1-6.4h3.1V12.8h-2.8V6.6L9.9 12.2H8.1L5.4 6.6V12.8z" fill="url(#lm)"/><text x="7.2" y="15.9" font-size="3.4" font-weight="bold" fill="#2aa6ad" font-family="Liberation Sans,sans-serif" textLength="8" lengthAdjust="spacingAndGlyphs">MAYA</text></svg>
<span style="left:624px;top:8px;height:17px;line-height:17px;font-size:12.5px;color:#969696;transform:scaleX(0.7601);transform-origin:0 50%;">スクリプト エディタ</span>
<span style="left:603px;top:35.8px;height:17px;line-height:17px;font-size:12px;color:#c6c6c6;transform:scaleX(0.6456);transform-origin:0 50%;">ファイル</span>
<span style="left:647px;top:35.8px;height:17px;line-height:17px;font-size:12px;color:#c6c6c6;transform:scaleX(0.8744);transform-origin:0 50%;">編集</span>
<span style="left:681px;top:35.8px;height:17px;line-height:17px;font-size:12px;color:#c6c6c6;transform:scaleX(0.6144);transform-origin:0 50%;">ヒストリ</span>
<span style="left:722.5px;top:35.8px;height:17px;line-height:17px;font-size:12px;color:#c6c6c6;transform:scaleX(0.6456);transform-origin:0 50%;">コマンド</span>
<span style="left:765.5px;top:35.8px;height:17px;line-height:17px;font-size:12px;color:#c6c6c6;transform:scaleX(0.7219);transform-origin:0 50%;">ヘルプ</span>
<svg style="left:596px;top:52px" width="600" height="25" viewBox="596 52 600 25"><path d="M694.5 55V74" stroke="#2f2f2f" stroke-width="1"/><path d="M771.5 55V74" stroke="#2f2f2f" stroke-width="1"/><path d="M849.5 55V74" stroke="#2f2f2f" stroke-width="1"/><path d="M902.5 55V74" stroke="#2f2f2f" stroke-width="1"/><path d="M956.4 55V74" stroke="#2f2f2f" stroke-width="1"/><path d="M1118.4 55V74" stroke="#2f2f2f" stroke-width="1"/><rect x="605" y="57" width="9.5" height="6.5" fill="#41b4c6"/><rect x="606.5" y="59" width="6.5" height="2.2" fill="#2d8e9d"/><path d="M601.5 60.5H604L605 62H616.5L614.5 70H602.3z" fill="#c6c6c6"/><rect x="629" y="57" width="9.5" height="6.5" fill="#41b4c6"/><rect x="630.5" y="59" width="6.5" height="2.2" fill="#2d8e9d"/><path d="M625.5 60.5H628L629 62H640.5L638.5 70H626.3z" fill="#c6c6c6"/><path d="M634 65.5L640 69L634 72.3z" fill="#41b4c6"/><path d="M650.5 58H661a1.2 1.2 0 0 1 1.2 1.2V69a1.2 1.2 0 0 1-1.2 1.2H650.5a1.2 1.2 0 0 1-1.2-1.2V59.2a1.2 1.2 0 0 1 1.2-1.2z" fill="#c6c6c6"/><rect x="652" y="58" width="7.5" height="4.5" fill="#444" opacity="0.0"/><rect x="651.8" y="58.5" width="7.8" height="4.2" fill="#dcdcdc"/><rect x="652.5" y="65.8" width="6.5" height="3.2" fill="#444"/><rect x="653.5" y="66.6" width="1.6" height="1.8" fill="#c6c6c6"/><path d="M678 58H686a1 1 0 0 1 1 1V66H677V59a1 1 0 0 1 1-1z" fill="#c6c6c6"/><rect x="679.5" y="58.3" width="5" height="2.6" fill="#444"/><rect x="680" y="62" width="4.6" height="3" fill="#444"/><rect x="672" y="65" width="15.2" height="5.3" fill="#41b4c6"/><path d="M673.5 67.7H686" stroke="#2a6f7b" stroke-width="1.5" stroke-dasharray="1.8 1.3"/><rect x="702.5" y="59" width="13" height="5" fill="#444" stroke="#c6c6c6" stroke-width="1"/><rect x="704.1" y="60.5" width="9.8" height="2" fill="#41b4c6"/><rect x="702.5" y="66" width="13" height="4.5" fill="none" stroke="#b0b0b0" stroke-width="0.8" stroke-dasharray="1.2 1.2"/><path d="M710.8 56.599999999999994L716.2 62.0M716.2 56.599999999999994L710.8 62.0" stroke="#e0e0e0" stroke-width="1.5"/><rect x="726.5" y="58.5" width="13.5" height="4.5" fill="none" stroke="#b0b0b0" stroke-width="0.8" stroke-dasharray="1.2 1.2"/><rect x="726.5" y="64.5" width="13.5" height="5" fill="#444" stroke="#c6c6c6" stroke-width="1"/><rect x="728.1" y="66.0" width="10.3" height="2" fill="#41b4c6"/><path d="M734.8 65.6L740.2 71.0M740.2 65.6L734.8 71.0" stroke="#e0e0e0" stroke-width="1.5"/><rect x="750" y="58.5" width="14" height="5" fill="#444" stroke="#c6c6c6" stroke-width="1"/><rect x="751.6" y="60.0" width="10.8" height="2" fill="#41b4c6"/><rect x="750" y="64.5" width="14" height="5" fill="#444" stroke="#c6c6c6" stroke-width="1"/><rect x="751.6" y="66.0" width="10.8" height="2" fill="#41b4c6"/><path d="M757.9 61.4L763.6999999999999 67.2M763.6999999999999 61.4L757.9 67.2" stroke="#e0e0e0" stroke-width="1.5"/><rect x="779.5" y="58.5" width="14" height="6" fill="#444" stroke="#c6c6c6" stroke-width="1"/><rect x="781.1" y="60.0" width="10.8" height="3" fill="#41b4c6"/><rect x="779.5" y="66.3" width="14" height="3.8" fill="none" stroke="#b0b0b0" stroke-width="0.8" stroke-dasharray="1.2 1.2"/><rect x="803.5" y="58.5" width="13.5" height="4" fill="none" stroke="#b0b0b0" stroke-width="0.8" stroke-dasharray="1.2 1.2"/><rect x="803.5" y="63.5" width="13.5" height="6.2" fill="#444" stroke="#c6c6c6" stroke-width="1"/><rect x="805.1" y="65.0" width="10.3" height="3.2" fill="#41b4c6"/><rect x="827.5" y="58.3" width="13.5" height="5.4" fill="#444" stroke="#c6c6c6" stroke-width="1"/><rect x="829.1" y="59.8" width="10.3" height="2.4000000000000004" fill="#41b4c6"/><rect x="827.5" y="64.6" width="13.5" height="5.4" fill="#444" stroke="#c6c6c6" stroke-width="1"/><rect x="829.1" y="66.1" width="10.3" height="2.4000000000000004" fill="#41b4c6"/><rect x="857" y="58.3" width="13.5" height="9" fill="#444" stroke="#c6c6c6" stroke-width="1"/><rect x="858.6" y="59.8" width="10.3" height="6" fill="#41b4c6"/><path d="M866 66.5L871.5 69.5L866 72.5z" fill="#41b4c6" stroke="#444" stroke-width="0.4"/><rect x="877.8" y="54" width="20.3" height="20.6" fill="#5285a6"/><rect x="883.8" y="57.3" width="11.5" height="3" fill="#2c6170"/><rect x="884.8" y="58.199999999999996" width="9.5" height="1.3" fill="#41b4c6"/><text x="880.3" y="61.0" font-size="5.5" fill="#e8e8e8" font-family="Liberation Sans,sans-serif">1</text><rect x="883.8" y="62.7" width="11.5" height="3" fill="#2c6170"/><rect x="884.8" y="63.6" width="9.5" height="1.3" fill="#41b4c6"/><text x="880.3" y="66.4" font-size="5.5" fill="#e8e8e8" font-family="Liberation Sans,sans-serif">2</text><rect x="883.8" y="68.1" width="11.5" height="3" fill="#2c6170"/><rect x="884.8" y="69.0" width="9.5" height="1.3" fill="#41b4c6"/><text x="880.3" y="71.8" font-size="5.5" fill="#e8e8e8" font-family="Liberation Sans,sans-serif">3</text><path d="M917 57L923.2 60.8L917 64.8zM912 63.2L918 67L912 71z" fill="#41b4c6"/><path d="M936.3 57.8L946.3 64L936.3 70.2z" fill="#41b4c6"/><rect x="962" y="55.2" width="103.5" height="15.6" rx="2" fill="#2b2b2b"/><rect x="1124.4" y="55.2" width="24.6" height="15.6" rx="2" fill="#2b2b2b"/><circle cx="1078" cy="62.5" r="4.1" fill="none" stroke="#41b4c6" stroke-width="1.5"/><path d="M1081 65.8L1085 70.3" stroke="#41b4c6" stroke-width="1.8"/><path d="M1085.6 57V61" stroke="#ddd" stroke-width="1.2"/><path d="M1083.6 60L1085.6 62.5L1087.6 60z" fill="#ddd"/><circle cx="1102" cy="62.5" r="4.1" fill="none" stroke="#41b4c6" stroke-width="1.5"/><path d="M1105 65.8L1109 70.3" stroke="#41b4c6" stroke-width="1.8"/><path d="M1109.6 58.2V62.5" stroke="#ddd" stroke-width="1.2"/><path d="M1107.6 59.5L1109.6 57L1111.6 59.5z" fill="#ddd"/><path d="M1156.5 57.5V64H1160" stroke="#ddd" stroke-width="1.3" fill="none"/><path d="M1159.5 62L1162 64L1159.5 66z" fill="#ddd"/><path d="M1162.5 59H1170M1164.5 64H1170M1162.5 69.3H1170" stroke="#41b4c6" stroke-width="1.5"/></svg>
<div style="left:598px;top:77px;width:938px;height:138.5px;background:#2b2b2b;"></div>
<span style="left:603px;top:80px;height:22px;line-height:22px;font-size:19px;color:#b4b4b4;font-family:'Liberation Mono','Noto Sans CJK JP',monospace;transform:scaleX(0.9961);transform-origin:0 50%;">cmds.keyframe( &#x27;pCube1&#x27;, attribute=&#x27;translateX&#x27;, query=True, keyframeCount=True )</span>
<span style="left:603px;top:101px;height:22px;line-height:22px;font-size:19px;color:#b4b4b4;font-family:'Liberation Mono','Noto Sans CJK JP',monospace"># <span style="position:static;display:inline;font-size:17.5px">結果</span>: 3 #</span>
<div style="left:959px;top:218px;width:360px;height:1px;background:repeating-linear-gradient(90deg,#6a6a6a 0 1px,transparent 1px 3px)"></div>
<div style="left:599.5px;top:223px;width:936.5px;height:16px;background:#373737;"></div>
<div style="left:601.5px;top:225px;width:44.5px;height:14px;background:#333;border:1px solid #3d3d3d;border-bottom:none;border-radius:2px 2px 0 0"></div>
<div style="left:647px;top:224.5px;width:60px;height:14.5px;background:#444;border-radius:2px 2px 0 0"></div>
<div style="left:709px;top:225px;width:60px;height:14px;background:#333;border:1px solid #3d3d3d;border-bottom:none;border-radius:2px 2px 0 0"></div>
<div style="left:771px;top:225px;width:33px;height:14px;background:#333;border:1px solid #3d3d3d;border-bottom:none;border-radius:2px 2px 0 0"></div>
<span style="left:612.5px;top:224px;height:16px;line-height:16px;font-size:12px;color:#8a8a8a;transform:scaleX(0.8506);transform-origin:0 50%;">MEL</span>
<span style="left:660px;top:224px;height:16px;line-height:16px;font-size:12px;color:#e8e8e8;transform:scaleX(0.9368);transform-origin:0 50%;">Python</span>
<span style="left:721.5px;top:224px;height:16px;line-height:16px;font-size:12px;color:#8a8a8a;transform:scaleX(0.9368);transform-origin:0 50%;">Python</span>
<span style="left:783.5px;top:223px;height:16px;line-height:16px;font-size:13px;color:#d0d0d0;">+</span>
<div style="left:633.6px;top:239.5px;width:2px;height:115px;background:#686868;"></div>
<div style="left:635.3px;top:239.5px;width:901px;height:115px;background:#2b2b2b;"></div>
<div style="left:638px;top:283px;width:853px;height:20px;background:#5285a6;"></div>
<span style="left:622.5px;top:243px;height:20px;line-height:20px;font-size:17.5px;color:#b8b8b8;font-family:'Liberation Mono','Noto Sans CJK JP',monospace;">1</span>
<span style="left:622.5px;top:263px;height:20px;line-height:20px;font-size:17.5px;color:#b8b8b8;font-family:'Liberation Mono','Noto Sans CJK JP',monospace;">2</span>
<span style="left:622.5px;top:283px;height:20px;line-height:20px;font-size:17.5px;color:#b8b8b8;font-family:'Liberation Mono','Noto Sans CJK JP',monospace;">3</span>
<span style="left:639px;top:243px;height:20px;line-height:20px;font-size:17.5px;font-family:'Liberation Mono','Noto Sans CJK JP',monospace;color:#c8c8c8"><span style="position:static;display:inline;color:#00ff00;font-weight:bold">from</span> maya <span style="position:static;display:inline;color:#00ff00;font-weight:bold">import</span> cmds</span>
<span style="left:639px;top:283px;height:20px;line-height:20px;font-size:17.5px;font-family:'Liberation Mono','Noto Sans CJK JP',monospace;color:#c8c8c8"><span style="position:static;display:inline;color:#ececec">cmds.</span><span style="position:static;display:inline;color:#ececec;font-style:italic">keyframe</span><span style="position:static;display:inline;color:#ececec">( &#x27;pCube1&#x27;, attribute=&#x27;translateX&#x27;, query=</span><span style="position:static;display:inline;color:#fff;font-weight:bold">True</span><span style="position:static;display:inline;color:#ececec">, keyframeCount=</span><span style="position:static;display:inline;color:#fff;font-weight:bold">True</span><span style="position:static;display:inline;color:#ececec"> )</span></span>
<svg style="left:560px;top:80px" width="200" height="70" viewBox="560 80 200 70"><path fill-rule="evenodd" fill="#ed1c24" d="M569.45 89.3H743.75V135.9H569.45zM578.5 98.1V126.8H734.7V98.1z"/></svg>
</body></html>
